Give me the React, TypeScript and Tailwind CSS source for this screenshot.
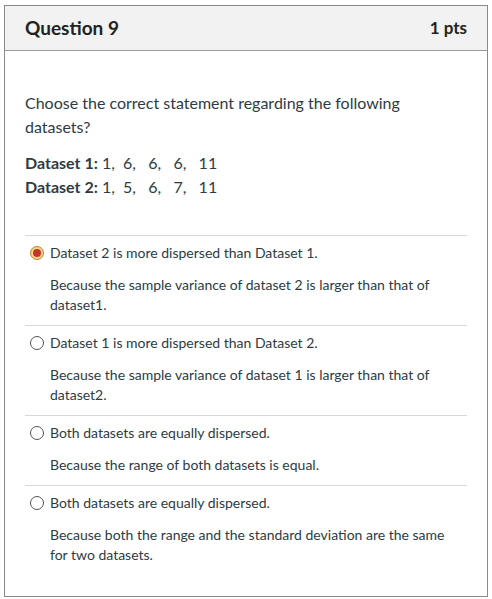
const options = [
  {
    label: 'Dataset 2 is more dispersed than Dataset 1.',
    detail: 'Because the sample variance of dataset 2 is larger than that of dataset1.',
    checked: true,
  },
  {
    label: 'Dataset 1 is more dispersed than Dataset 2.',
    detail: 'Because the sample variance of dataset 1 is larger than that of dataset2.',
    checked: false,
  },
  {
    label: 'Both datasets are equally dispersed.',
    detail: 'Because the range of both datasets is equal.',
    checked: false,
  },
  {
    label: 'Both datasets are equally dispersed.',
    detail: 'Because both the range and the standard deviation are the same for two datasets.',
    checked: false,
  },
]

function Radio({ checked }: { checked: boolean }) {
  if (checked) {
    return (
      <span className="flex h-[14px] w-[14px] shrink-0 items-center justify-center rounded-full border border-[#b5882c] bg-[#f7d48a]">
        <span className="h-[8px] w-[8px] rounded-full bg-[#c6332b]" />
      </span>
    )
  }
  return <span className="h-[14px] w-[14px] shrink-0 rounded-full border border-[#555]" />
}

export default function App() {
  return (
    <div className="h-[599px] w-[492px] bg-white pl-[4px] pt-[5px] font-['Lato','Noto_Sans',sans-serif] text-[#2d3b45]">
      <div className="h-[592px] w-[484px] border border-[#8a8a8a]">
        <div className="flex h-[45px] items-center justify-between border-b border-[#9a9a9a] bg-[#f2f2f2] px-[20px]">
          <h2 className="text-[19px] font-bold text-[#222]">Question 9</h2>
          <span className="text-[17px] font-bold text-[#222]">1 pts</span>
        </div>
        <div className="px-[20px] pt-[40px]">
          <p className="text-[16px] leading-[24px]">
            Choose the correct statement regarding the following datasets?
          </p>
          <div className="mt-[12px] text-[16px] leading-[24px]">
            <p>
              <strong>Dataset 1:</strong> 1,&nbsp; 6,&nbsp;&nbsp; 6,&nbsp;&nbsp; 6,&nbsp;&nbsp; 11
            </p>
            <p>
              <strong>Dataset 2:</strong> 1,&nbsp; 5,&nbsp;&nbsp; 6,&nbsp;&nbsp; 7,&nbsp;&nbsp; 11
            </p>
          </div>
          <div className="mt-[36px]">
            {options.map((o, i) => (
              <div key={i} className="border-t border-[#d8d8d8] pb-[10px] pt-[7px] pr-[20px]">
                <div className="flex items-center gap-[6px] pl-[5px] text-[14px] leading-[20px]">
                  <Radio checked={o.checked} />
                  <span>{o.label}</span>
                </div>
                <p className="mt-[12px] pl-[25px] text-[14px] leading-[20px]">{o.detail}</p>
              </div>
            ))}
          </div>
        </div>
      </div>
    </div>
  )
}
